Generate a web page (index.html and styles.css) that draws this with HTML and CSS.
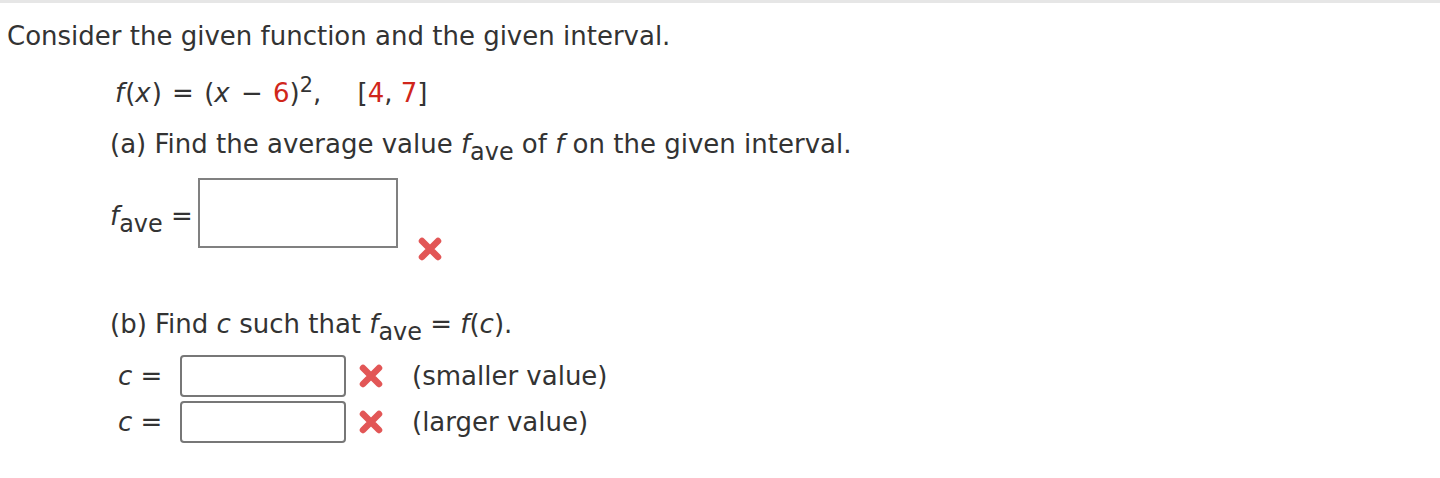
FILE: index.html
```html
<!DOCTYPE html>
<html lang="en">
<head>
    <meta charset="UTF-8">
    <title>Average Value</title>
    <link rel="stylesheet" href="styles.css">
</head>
<body>
    <div class="top-rule"></div>
    <div class="question">
        <p class="intro">Consider the given function and the given interval.</p>

        <div class="formula">
            <i>f</i>(<i>x</i>) = (<i>x</i> &minus; <span class="red">6</span>)<sup>2</sup>,
            <span class="interval">[<span class="red">4</span>, <span class="red">7</span>]</span>
        </div>

        <p class="part">(a) Find the average value <i>f</i><sub>ave</sub> of <i>f</i> on the given interval.</p>

        <div class="answer-a">
            <span class="label"><i>f</i><sub>ave</sub> =</span>
            <input type="text" class="box-big">
            <span class="mark mark-low">
                <svg width="26" height="26" viewBox="0 0 26 26"><path d="M5 5 L21 21 M21 5 L5 21" stroke="#e25656" stroke-width="6.5" stroke-linecap="round"/></svg>
            </span>
        </div>

        <p class="part part-b">(b) Find <i>c</i> such that <i>f</i><sub>ave</sub> = <i>f</i>(<i>c</i>).</p>

        <div class="answer-c">
            <span class="label-c"><i>c</i> =</span>
            <input type="text" class="box-small">
            <span class="mark">
                <svg width="26" height="26" viewBox="0 0 26 26"><path d="M5 5 L21 21 M21 5 L5 21" stroke="#e25656" stroke-width="6.5" stroke-linecap="round"/></svg>
            </span>
            <span class="note">(smaller value)</span>
        </div>
        <div class="answer-c">
            <span class="label-c"><i>c</i> =</span>
            <input type="text" class="box-small">
            <span class="mark">
                <svg width="26" height="26" viewBox="0 0 26 26"><path d="M5 5 L21 21 M21 5 L5 21" stroke="#e25656" stroke-width="6.5" stroke-linecap="round"/></svg>
            </span>
            <span class="note">(larger value)</span>
        </div>
    </div>
</body>
</html>
```

FILE: styles.css
```css
body {
    margin: 0;
    background: #fff;
    font-family: "DejaVu Sans", Verdana, sans-serif;
    font-size: 26px;
    line-height: 30px;
    color: #333;
}

.top-rule {
    height: 3px;
    background: #e6e6e6;
}

.question {
    padding: 18px 0 0 7px;
}

p {
    margin: 0;
}

.red {
    color: #d0261b;
}

sub {
    font-size: 0.92em;
    vertical-align: -0.3em;
    line-height: 0;
}

sup {
    font-size: 0.8em;
    line-height: 0;
}

.formula {
    margin: 27px 0 0 108px;
    word-spacing: 2px;
}

.formula i {
    margin-right: 1px;
}

.interval {
    margin-left: 26px;
    word-spacing: 0;
}

.part {
    margin: 21px 0 0 103px;
}

.answer-a {
    display: flex;
    align-items: flex-start;
    margin: 19px 0 0 103px;
}

.label {
    width: 88px;
    padding-top: 23px;
}

.box-big {
    width: 200px;
    height: 70px;
    box-sizing: border-box;
    border: 2px solid #808080;
    border-radius: 0;
    margin: 0;
    padding: 0;
}

.mark {
    display: flex;
    margin-left: 12px;
}

.mark-low {
    margin: 58px 0 0 19px;
}

.part-b {
    margin-top: 47px;
}

.answer-c {
    display: flex;
    align-items: center;
    margin: 16px 0 0 111px;
}

.answer-c + .answer-c {
    margin-top: 4px;
}

.label-c {
    width: 62px;
}

.box-small {
    width: 166px;
    height: 42px;
    box-sizing: border-box;
    border: 2px solid #777;
    border-radius: 4px;
    margin: 0;
    padding: 0;
}

.note {
    margin-left: 28px;
}
```
